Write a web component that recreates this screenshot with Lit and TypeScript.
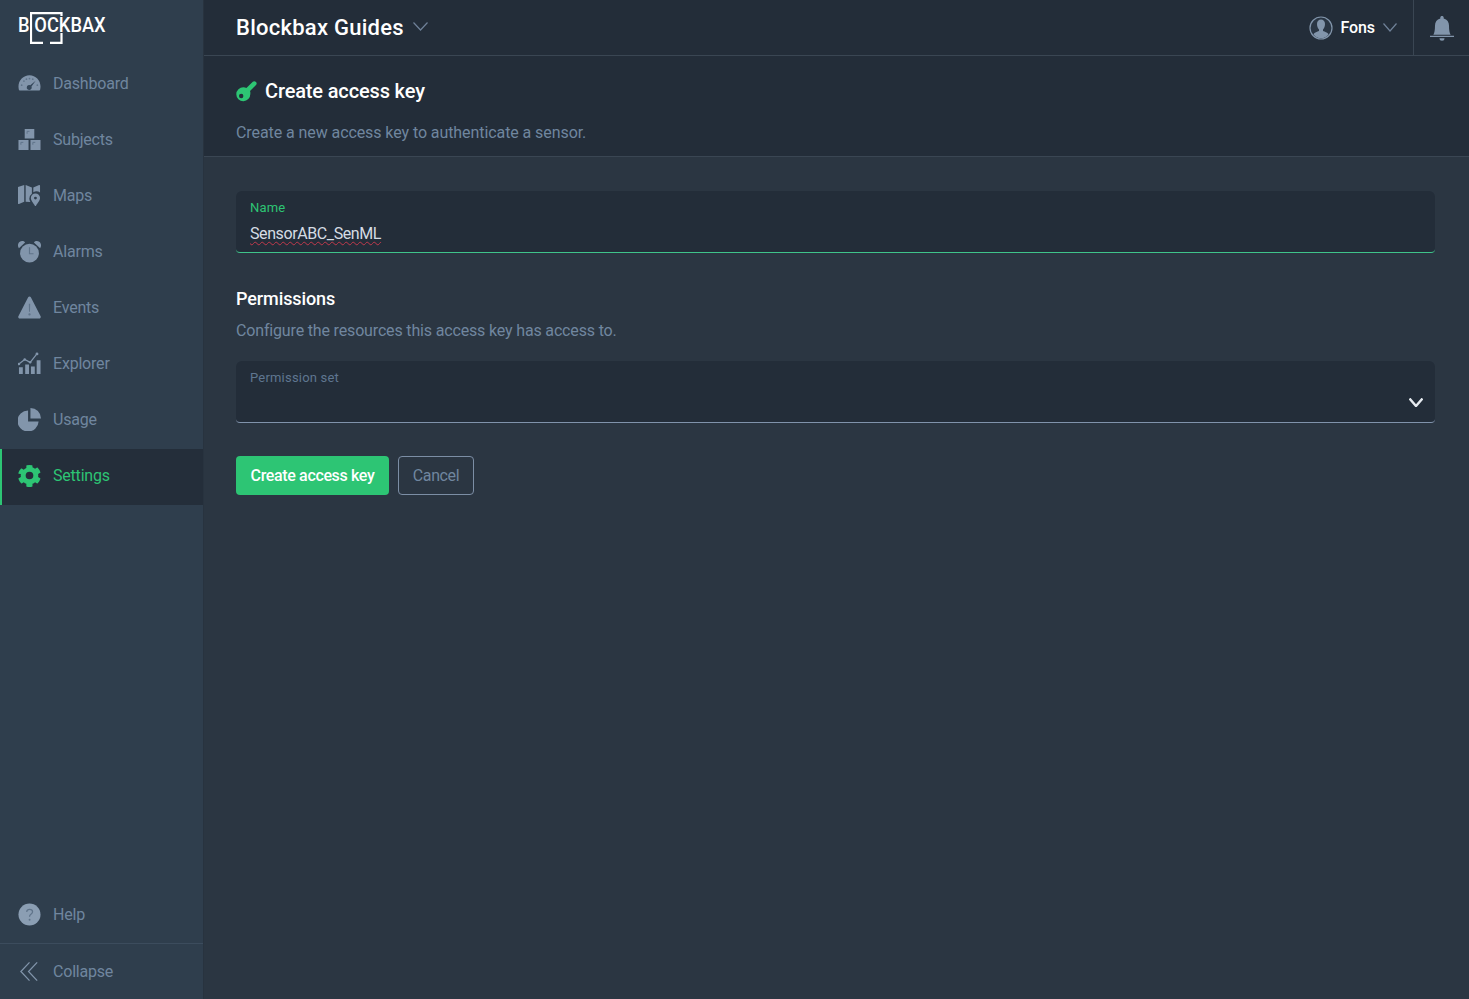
import { LitElement, css, html, svg } from 'lit'
import { customElement } from 'lit/decorators.js'

const navIcons: Record<string, unknown> = {
  Dashboard: svg`<path d="M12 3.500C5.600 3.500.5 8.800.5 15.200c0 1.100.2 2.200.4 3.300.1.4.5.7.9.7h20.400c.4 0 .8-.3.9-.7.2-1.100.4-2.200.4-3.300C23.500 8.800 18.400 3.500 12 3.500z"/><g fill="#5f7389"><circle cx="12" cy="6.800" r=".9"/><circle cx="6.200" cy="9.500" r=".9"/><circle cx="8.800" cy="7.500" r=".9"/><circle cx="15.400" cy="7.500" r=".9"/><circle cx="3.800" cy="13.800" r=".9"/><circle cx="20.200" cy="13.800" r=".9"/></g><path fill="#35475a" d="m18.400 9.200-4.300 5.900a2.600 2.600 0 1 1-1.300-1.300z"/>`,
  Subjects: svg`<path d="M7 1h10v10H7zM.5 12.500h10.500V23H.5zM13 12.500h10.500V23H13z"/><path fill="none" stroke="#5f7389" stroke-width="1" d="M9.500 6V3.500H12M3 17.500V15h2.500M15.500 17.500V15H18"/>`,
  Maps: svg`<path d="M0 3.200 6.500 1v17.500L1 20.800a.7.7 0 0 1-1-.7zM8 1l6.500 2.700v6.400a6.500 6.500 0 0 0-2.700 5.300c0 1 .5 2.200 1.100 3.300L8 18.500zM16 3.700 22 1.100c.5-.2 1 .1 1 .7v7a6.300 6.300 0 0 0-7-.3z"/><path fill-rule="evenodd" d="M18.200 9.900a4.800 4.800 0 0 0-4.800 4.800c0 2.400 3 6.200 4.200 7.900.3.400.9.400 1.200 0 1.200-1.700 4.200-5.500 4.200-7.900a4.800 4.800 0 0 0-4.800-4.800zm0 3.300a1.500 1.500 0 1 1 0 3 1.500 1.500 0 0 1 0-3z"/>`,
  Alarms: svg`<circle cx="12" cy="13.800" r="9.800"/><path d="M.9 8.500C-.7 6.300-.2 3.300 1.900 1.800 3.800.6 6.100.9 7.400 2.500zM23.100 8.500c1.600-2.200 1.100-5.200-1-6.700-1.900-1.200-4.200-.9-5.500.7z"/><path fill="none" stroke="#5f7389" stroke-width="1.200" d="M12 7.500v6.800h4.200"/>`,
  Events: svg`<path d="M12 .5c-.6 0-1.100.3-1.400.8L.4 21.200c-.5 1 .2 2.300 1.400 2.300h20.400c1.200 0 1.900-1.300 1.400-2.300L13.400 1.300c-.3-.5-.8-.8-1.400-.8z"/><path fill="#5f7389" d="M11.300 8h1.400l-.2 8.500h-1zM12 18a1.200 1.200 0 1 1 0 2.400 1.200 1.200 0 0 1 0-2.400z"/>`,
  Explorer: svg`<path d="M1 16h4v7H1zM7.500 13h4v10h-4zM13.500 15h4v8h-4zM19.500 8.500h4V23h-4z"/><path d="M.6 12.800 7 7.800l5.700 3 6.800-8.500" fill="none" stroke="currentColor" stroke-width="1.300"/><circle cx="1" cy="12.500" r="1.300"/><circle cx="7" cy="7.800" r="1.300"/><circle cx="12.700" cy="10.800" r="1.300"/><circle cx="19.800" cy="2" r="1.500"/>`,
  Usage: svg`<path d="M10.500 2.500A11 11 0 1 0 21.500 14H10.500z"/><path d="M13 0a11 11 0 0 1 11 11H13z"/>`,
  Settings: svg`<path fill-rule="evenodd" d="M23.100 14.800 21 13.600a9.500 9.500 0 0 0 0-3.200l2.100-1.200c.2-.1.300-.4.300-.7a12.400 12.400 0 0 0-2.800-4.700.6.600 0 0 0-.7-.1l-2.100 1.200a9.300 9.300 0 0 0-2.700-1.600V1.900c0-.3-.2-.5-.5-.6a12.500 12.500 0 0 0-5.400 0c-.3.100-.5.300-.5.600v2.400a9.600 9.600 0 0 0-2.700 1.600L3.900 4.700a.6.600 0 0 0-.7.100A12.400 12.400 0 0 0 .4 9.500c-.1.300.1.600.3.700L3 10.400a9.500 9.500 0 0 0 0 3.200l-2.300 1.200c-.2.100-.4.400-.3.700.6 1.800 1.600 3.400 2.800 4.700.2.200.5.200.7.100L6 19.100a9.300 9.300 0 0 0 2.700 1.600v2.400c0 .3.200.5.500.6 1.800.4 3.600.4 5.400 0 .3-.1.500-.3.500-.6v-2.400a9.600 9.600 0 0 0 2.700-1.600l2.100 1.200c.2.100.5.100.7-.1 1.200-1.300 2.200-2.900 2.800-4.700.1-.3-.1-.6-.3-.7zM12 16a4 4 0 1 1 0-8 4 4 0 0 1 0 8z"/>`,
  Help: svg`<circle cx="12" cy="12" r="11.500" fill="#8b9eb3"/><path fill="none" stroke="#5f7389" stroke-width="1.300" d="M9 9.300c.2-1.700 1.500-2.700 3.100-2.700 1.700 0 3.100 1.100 3.100 2.600 0 1.300-.8 1.900-1.700 2.500-.9.600-1.400 1.100-1.400 2.100v.6"/><circle cx="12.100" cy="17.400" r="1" fill="#5f7389"/>`,
}

const mainNav = ['Dashboard', 'Subjects', 'Maps', 'Alarms', 'Events', 'Explorer', 'Usage', 'Settings']

@customElement('app-root')
export class AppRoot extends LitElement {
  static styles = css`
    :host {
      display: flex;
      height: 999px;
      overflow: hidden;
      background: #2b3642;
      color: #ffffff;
      font-family: 'Roboto', 'Noto Sans', sans-serif;
      font-size: 16px;
    }

    .sidebar {
      position: relative;
      width: 203px;
      flex: none;
      display: flex;
      flex-direction: column;
      background: #2f3e4d;
      box-shadow: 1px 0 0 #28333f;
    }

    .logo-wrap {
      height: 57px;
      padding-left: 18px;
      flex: none;
    }

    .logo {
      position: relative;
      display: inline-block;
      margin-top: 13px;
      line-height: 24px;
      color: #ffffff;
      white-space: nowrap;
    }

    .logo-text {
      display: inline-block;
      font-size: 21px;
      font-weight: 500;
      transform: scaleX(0.87);
      transform-origin: left;
    }

    .logo b {
      font-weight: 500;
      margin-right: 5.5px;
    }

    .logo svg {
      position: absolute;
      left: 12px;
      top: -1px;
    }

    .nav-item {
      height: 56px;
      display: flex;
      align-items: center;
      gap: 12px;
      padding: 0 0 4px 18px;
      color: #70869f;
      box-sizing: border-box;
    }

    .nav-item svg {
      width: 23px;
      height: 23px;
      fill: #8295ab;
      color: #8295ab;
      flex: none;
    }

    .nav-item.active {
      background: #242e3a;
      color: #2dc574;
      border-left: 2px solid #2dc574;
      padding-left: 16px;
    }

    .nav-item.active svg {
      fill: #2dc574;
    }

    .nav-item.low {
      padding-bottom: 2px;
    }

    .spacer {
      flex: 1;
    }

    .nav-item.collapse {
      border-top: 1px solid #3c4c5d;
      padding-bottom: 0;
    }

    .collapse svg {
      fill: none;
      stroke: #8295ab;
    }

    .nav-item .label {
      letter-spacing: -0.2px;
    }

    .main {
      flex: 1;
      display: flex;
      flex-direction: column;
      min-width: 0;
    }

    .topbar {
      height: 56px;
      flex: none;
      box-sizing: border-box;
      display: flex;
      align-items: center;
      padding-left: 33px;
      background: #232d39;
      border-bottom: 1px solid #3a4653;
    }

    .project {
      font-size: 22px;
      font-weight: 500;
      letter-spacing: 0.25px;
      margin-top: -1px;
    }

    .project-caret {
      margin-left: 9px;
      margin-top: -5px;
    }

    .push {
      flex: 1;
    }

    .user {
      display: flex;
      align-items: center;
      height: 100%;
      padding: 0 16px 0 0;
      box-sizing: border-box;
      font-size: 16px;
      font-weight: 500;
    }

    .user .name {
      margin: 0 8px 0 8px;
      letter-spacing: -0.1px;
    }

    .bell {
      width: 56px;
      height: 100%;
      display: flex;
      align-items: center;
      justify-content: center;
      border-left: 1px solid #3a4653;
      box-sizing: border-box;
    }

    .page-head {
      height: 101px;
      flex: none;
      box-sizing: border-box;
      padding: 20px 33px 0;
      background: #232d39;
      border-bottom: 1px solid #3a4653;
    }

    .page-title {
      display: flex;
      align-items: center;
      gap: 8px;
      height: 30px;
      font-size: 20px;
      font-weight: 500;
      letter-spacing: -0.15px;
    }

    .sub {
      color: #70869f;
      font-size: 16px;
      line-height: 22px;
      letter-spacing: -0.08px;
    }

    .page-head .sub {
      margin-top: 16px;
    }

    .form {
      padding: 34px 34px 0 33px;
    }

    .field {
      position: relative;
      height: 62px;
      box-sizing: border-box;
      padding: 9px 14px 0;
      background: #232d39;
      border-radius: 6px 6px 4px 4px;
      border-bottom: 1px solid #8093ab;
    }

    .field.focus {
      border-bottom-color: #3fc48a;
    }

    .field-label {
      font-size: 13px;
      line-height: 16px;
      color: #5f7690;
      letter-spacing: 0.2px;
    }

    .focus .field-label {
      color: #2dc574;
    }

    .field-value {
      margin-top: 7px;
      font-size: 16px;
      line-height: 22px;
      letter-spacing: -0.4px;
      color: #d5dce4;
      display: inline-block;
      text-decoration: underline wavy #c0394b 1px;
      text-underline-offset: 2px;
    }

    .select-caret {
      position: absolute;
      right: 12px;
      bottom: 11px;
    }

    h2 {
      margin: 34px 0 0;
      font-size: 18px;
      line-height: 24px;
      font-weight: 500;
      letter-spacing: -0.1px;
    }

    .perm-sub {
      margin: 9px 0 19px;
      letter-spacing: -0.16px;
    }

    .actions {
      display: flex;
      gap: 9px;
      margin-top: 33px;
    }

    button {
      height: 39px;
      box-sizing: border-box;
      border-radius: 4px;
      font: inherit;
      padding: 0;
    }

    .primary {
      width: 153px;
      background: #2dc574;
      border: none;
      color: #ffffff;
      font-weight: 500;
      letter-spacing: -0.35px;
    }

    .secondary {
      width: 76px;
      background: transparent;
      border: 1px solid #7c8ea5;
      color: #70869f;
      letter-spacing: -0.4px;
    }
  `

  renderNav(name: string, active = false, low = false) {
    return html`
      <div class="nav-item ${active ? 'active' : ''} ${low ? 'low' : ''}">
        <svg viewBox="0 0 24 24">${navIcons[name]}</svg>
        <span class="label">${name}</span>
      </div>
    `
  }

  caret(w: number, h: number, color: string, sw = 1.2) {
    return html`<svg width=${w} height=${h} viewBox="0 0 ${w} ${h}" fill="none" stroke=${color} stroke-width=${sw}>
      <path d="M.5 .5 ${w / 2} ${h - 1} ${w - 0.5} .5" />
    </svg>`
  }

  render() {
    return html`
      <aside class="sidebar">
        <div class="logo-wrap">
          <div class="logo">
            <span class="logo-text"><b>B</b>OCKBAX</span>
            <svg width="33" height="32" viewBox="0 0 33 32" fill="none" stroke="#fff" stroke-width="2.200">
              <path d="M1 16V1.100h30.500V4M1 16v14.900h12M20 30.900h11.500V21" />
            </svg>
          </div>
        </div>
        ${mainNav.map((n) => this.renderNav(n, n === 'Settings'))}
        <div class="spacer"></div>
        ${this.renderNav('Help', false, true)}
        <div class="nav-item collapse">
          <svg viewBox="0 0 24 24" stroke-width="1.300">
            <path d="M12 2.500 3 12l9 9.500M20 2.500 11 12l9 9.500" />
          </svg>
          <span class="label">Collapse</span>
        </div>
      </aside>
      <div class="main">
        <header class="topbar">
          <span class="project">Blockbax Guides</span>
          <span class="project-caret">${this.caret(15, 9, '#6f8198')}</span>
          <span class="push"></span>
          <div class="user">
            <svg width="24" height="24" viewBox="0 0 24 24">
              <circle cx="12" cy="12" r="11" fill="#2a3644" stroke="#8295ab" stroke-width="1.200" />
              <path
                fill="#8295ab"
                d="M8 8c0-3 1.800-4.500 4-4.500s4 1.500 4 4.500c0 2.500-.9 4.600-2 5.500v1.500c1.800.9 4.400 1.200 5.600 3.200A10 10 0 0 1 12 22.300a10 10 0 0 1-7.600-4.100c1.200-2 3.800-2.300 5.600-3.200v-1.500C8.900 12.600 8 10.500 8 8z"
              />
            </svg>
            <span class="name">Fons</span>
            ${this.caret(14, 9, '#6f8198')}
          </div>
          <div class="bell">
            <svg width="24" height="26" viewBox="0 0 24 26" fill="#8295ab">
              <path
                d="M12 1c-1 0-1.700.7-1.700 1.600v.8C6.800 4.200 5 7 5 10.500c0 4.800-.6 7.600-1.600 9.200h17.200C19.600 18.100 19 15.300 19 10.500c0-3.500-1.800-6.300-5.300-7.100v-.8C13.700 1.700 13 1 12 1zM0 20.800h24v1.200H0zM9.500 23.200h5a2.500 2.500 0 0 1-5 0z"
              />
            </svg>
          </div>
        </header>
        <section class="page-head">
          <div class="page-title">
            <svg width="21" height="21" viewBox="0 0 21 21" fill="#2dc574">
              <path
                fill-rule="evenodd"
                d="M16.800.7c.8-.7 2.300-.7 3.200.2.900 1 .9 2.400 0 3.200l-6 5.800c.4 1 .5 2 .3 3.100a7 7 0 1 1-6.800-6.800c1 0 2 .2 2.900.7zM5.200 12.800a2.200 2.200 0 1 0 0 4.400 2.200 2.200 0 0 0 0-4.400z"
              />
            </svg>
            <span>Create access key</span>
          </div>
          <div class="sub">Create a new access key to authenticate a sensor.</div>
        </section>
        <section class="form">
          <div class="field focus">
            <div class="field-label">Name</div>
            <div class="field-value">SensorABC_SenML</div>
          </div>
          <h2>Permissions</h2>
          <div class="sub perm-sub">Configure the resources this access key has access to.</div>
          <div class="field">
            <div class="field-label">Permission set</div>
            <span class="select-caret">${this.caret(14, 9, '#e6ebf0', 2.4)}</span>
          </div>
          <div class="actions">
            <button class="primary">Create access key</button>
            <button class="secondary">Cancel</button>
          </div>
        </section>
      </div>
    `
  }
}
